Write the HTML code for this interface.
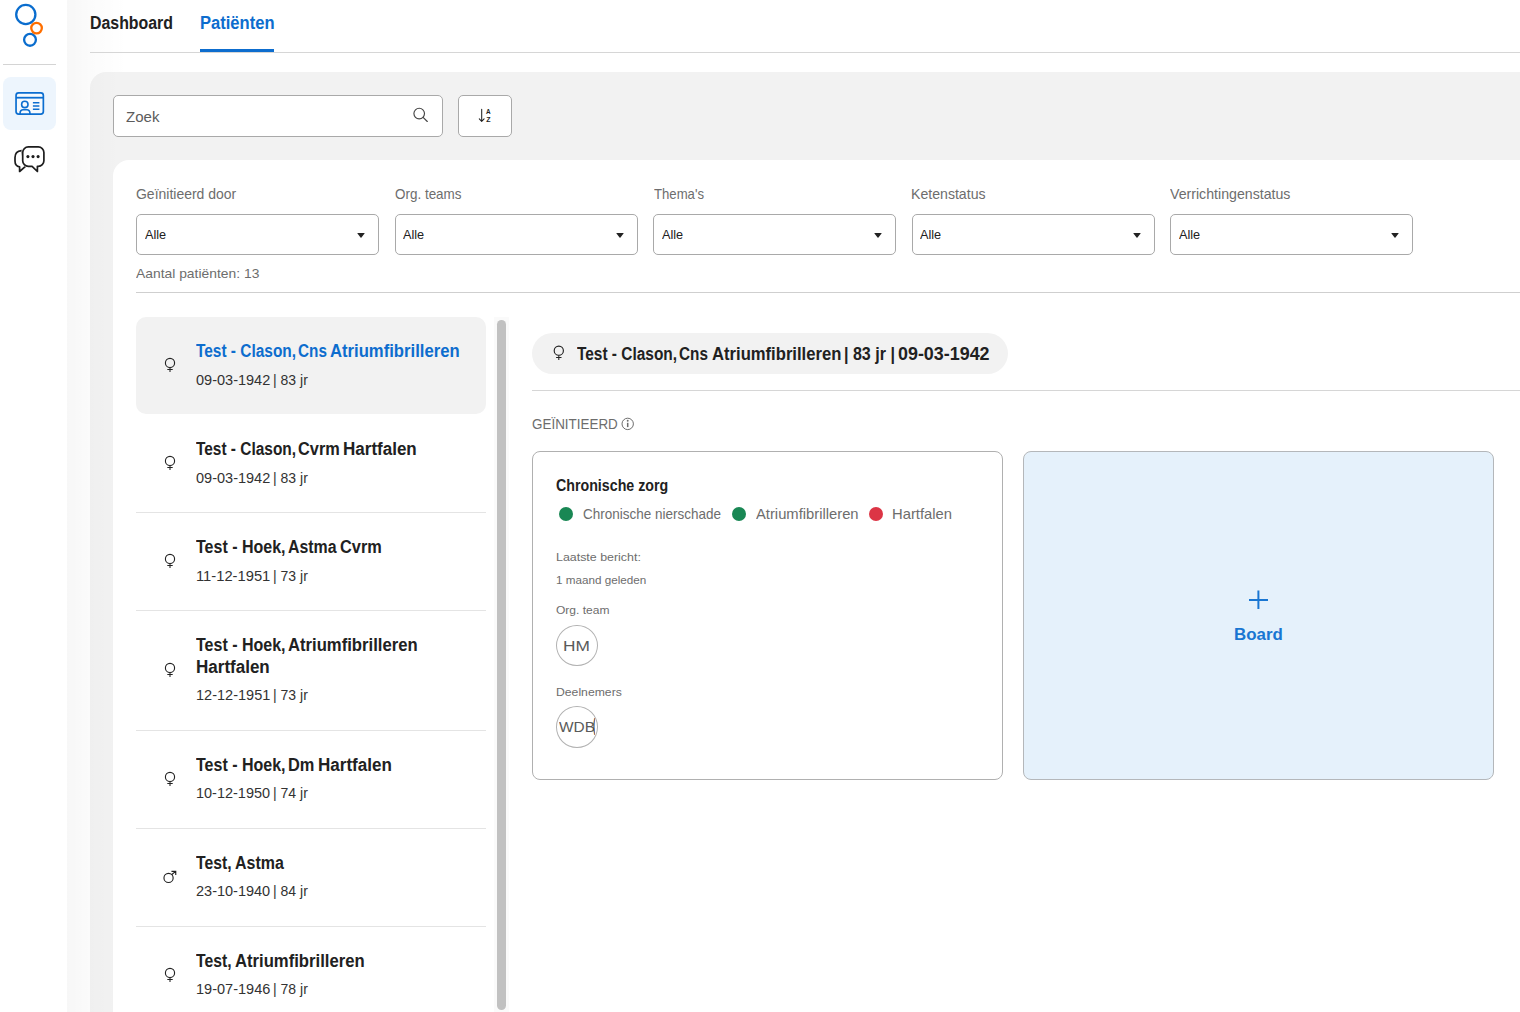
<!DOCTYPE html>
<html lang="nl"><head><meta charset="utf-8"><title>Patiënten</title>
<style>
html,body{margin:0;padding:0}
html{overflow:hidden}
body{width:1520px;height:1012px;overflow:hidden;background:#fff;position:relative;font-family:"Liberation Sans",sans-serif;color:#212121}
ul,li{margin:0;padding:0;list-style:none}
.a{position:absolute}
.t{position:absolute;white-space:nowrap;transform-origin:0 0;line-height:1.2}
.sel{position:absolute;top:214px;width:241px;height:39px;border:1px solid #a9a9a9;border-radius:5px;background:#fff}
.sel:after{content:"";position:absolute;right:13px;top:18px;border-left:4.5px solid transparent;border-right:4.5px solid transparent;border-top:5px solid #222;border-radius:1px}
.hr{position:absolute;height:1px;background:#e4e4e4;left:136px;width:350px}
.av{position:absolute;left:556px;width:40px;height:39.4px;border:1px solid #b2b2b2;border-radius:50%;background:#fff}
.dot{position:absolute;width:14px;height:14px;border-radius:50%;top:507px}
</style></head><body>
<div class="a" style="left:67px;top:0;width:60px;height:1012px;background:linear-gradient(to right,rgba(0,0,0,.032),rgba(0,0,0,.014) 40%,rgba(0,0,0,0))"></div>
<div class="a" style="left:90px;top:72px;width:1430px;height:940px;background:#f2f2f2;border-radius:16px 0 0 0"></div>
<div class="a" style="left:90px;top:72px;width:30px;height:940px;border-radius:16px 0 0 0;background:linear-gradient(to right,rgba(0,0,0,.012),rgba(0,0,0,0))"></div>
<div class="a" style="left:113px;top:160px;width:1407px;height:852px;background:#fff;border-radius:16px 0 0 0"></div>
<aside>
<div class="a" style="left:0;top:0;width:67px;height:1012px;background:#fff"></div>
<svg class="a" style="left:0;top:0" width="67" height="200" viewBox="0 0 67 200"><circle cx="30" cy="39.85" r="5.9" fill="none" stroke="#0a6dce" stroke-width="2.3"/><circle cx="36.55" cy="28.1" r="5.3" fill="none" stroke="#ff6f00" stroke-width="2.3"/><circle cx="25.8" cy="14.5" r="9.6" fill="none" stroke="#0a6dce" stroke-width="2.3"/><rect x="3" y="64" width="53" height="1" fill="#d4d4d4"/><rect x="3" y="77" width="53" height="53" rx="8" fill="#edf5fd"/><g fill="none" stroke="#0c6ed0" stroke-width="1.7"><rect x="16.05" y="92.95" width="27.3" height="21.1" rx="2.6" fill="#f6fafe"/><path d="M16 97.7H43.4" stroke-width="1.8"/><circle cx="24.8" cy="104.4" r="3.2" stroke-width="1.6"/><path d="M20.1 114.2v-1.5a2.9 2.9 0 0 1 2.9-2.9h4.0a2.9 2.9 0 0 1 2.9 2.9v1.5" stroke-width="1.6"/><path d="M32.9 102.8H39.4M32.9 106H39.4M32.9 109.15H39.4" stroke-width="1.5"/></g><g fill="#fff" stroke="#1d1d1d" stroke-width="1.7" stroke-linejoin="round"><path d="M21.5 150.6 C17.5 151 15 153.6 15 157.5 v3.5 c0 3.4 1.8 5.4 4.6 5.9 v4.6 l5.6-4.9 z"/><path d="M28.3 146.9 h10 a5.6 5.6 0 0 1 5.6 5.6 v8.2 a5.6 5.6 0 0 1-5.6 5.6 h-0.9 v5.0 l-5.3-5.0 h-3.8 a5.6 5.6 0 0 1-5.6-5.6 v-8.2 a5.6 5.6 0 0 1 5.6-5.6 z" stroke="#fff" stroke-width="2.7"/><path d="M28.3 146.9 h10 a5.6 5.6 0 0 1 5.6 5.6 v8.2 a5.6 5.6 0 0 1-5.6 5.6 h-0.9 v5.2 l-5.3-5.2 h-3.8 a5.6 5.6 0 0 1-5.6-5.6 v-8.2 a5.6 5.6 0 0 1 5.6-5.6 z"/></g><g fill="#1d1d1d"><circle cx="27.9" cy="156.6" r="1.55"/><circle cx="33" cy="156.6" r="1.55"/><circle cx="38.1" cy="156.6" r="1.55"/></g></svg>
</aside>
<nav>
<div class="a" style="left:90px;top:52px;width:1430px;height:1px;background:#d6d6d6"></div>
<div class="a" style="left:200px;top:49px;width:74px;height:3px;background:#0d6dce"></div>
<span class="t" id="t0" style="left:89.84px;top:13.01px;font-size:18px;font-weight:400;color:#212121;transform:scaleX(0.8826);font-weight:700;">Dashboard</span>
<span class="t" id="t1" style="left:200.09px;top:13.01px;font-size:18px;font-weight:400;color:#0d6dce;transform:scaleX(0.9196);font-weight:700;">Patiënten</span>
</nav>
<section>
<div class="a" style="left:113px;top:95px;width:328px;height:40px;border:1px solid #a9a9a9;border-radius:5px;background:#fff"></div>
<span class="t" id="t2" style="left:126.42px;top:107.91px;font-size:15.2px;font-weight:400;color:#5c5c5c;transform:scaleX(0.9897);">Zoek</span>
<svg class="a" style="left:410px;top:105px" width="22" height="22" viewBox="410 105 22 22"><g fill="none" stroke="#444" stroke-width="1.15" stroke-linecap="round"><circle cx="419.2" cy="113.55" r="5.3"/><path d="M423.1 117.4L427.3 121.5"/></g></svg>
<div class="a" style="left:458px;top:95px;width:52px;height:40px;border:1px solid #a9a9a9;border-radius:5px;background:#fff"></div>
<svg class="a" style="left:474px;top:105px" width="24" height="22" viewBox="474 105 24 22"><path d="M481.7 109.3V121.3M479.3 118.9L481.7 121.4L484.1 118.9" fill="none" stroke="#222" stroke-width="1.05" stroke-linecap="round" stroke-linejoin="round"/><text x="485.9" y="113.75" font-family="Liberation Sans,sans-serif" font-weight="700" font-size="6.4" fill="#222">A</text><text x="486.2" y="121.55" font-family="Liberation Sans,sans-serif" font-weight="700" font-size="7" fill="#222">Z</text></svg>
</section>
<section>
<div class="sel" style="left:136.0px"></div>
<div class="sel" style="left:394.5px"></div>
<div class="sel" style="left:653.0px"></div>
<div class="sel" style="left:911.5px"></div>
<div class="sel" style="left:1170.0px"></div>
<span class="t" id="t3" style="left:135.70px;top:185.82px;font-size:13.9px;font-weight:400;color:#6d6d6d;transform:scaleX(1.0060);">Geïnitieerd door</span>
<span class="t" id="t4" style="left:394.66px;top:185.82px;font-size:13.9px;font-weight:400;color:#6d6d6d;transform:scaleX(0.9682);">Org. teams</span>
<span class="t" id="t5" style="left:653.60px;top:185.82px;font-size:13.9px;font-weight:400;color:#6d6d6d;transform:scaleX(0.9459);">Thema's</span>
<span class="t" id="t6" style="left:911.04px;top:185.82px;font-size:13.9px;font-weight:400;color:#6d6d6d;transform:scaleX(1.0162);">Ketenstatus</span>
<span class="t" id="t7" style="left:1170.34px;top:185.82px;font-size:13.9px;font-weight:400;color:#6d6d6d;transform:scaleX(1.0193);">Verrichtingenstatus</span>
<span class="t" id="t8" style="left:144.78px;top:227.80px;font-size:12.5px;font-weight:400;color:#212121;transform:scaleX(1.0164);">Alle</span>
<span class="t" id="t9" style="left:403.28px;top:227.80px;font-size:12.5px;font-weight:400;color:#212121;transform:scaleX(1.0164);">Alle</span>
<span class="t" id="t10" style="left:661.78px;top:227.80px;font-size:12.5px;font-weight:400;color:#212121;transform:scaleX(1.0164);">Alle</span>
<span class="t" id="t11" style="left:920.28px;top:227.80px;font-size:12.5px;font-weight:400;color:#212121;transform:scaleX(1.0164);">Alle</span>
<span class="t" id="t12" style="left:1178.78px;top:227.80px;font-size:12.5px;font-weight:400;color:#212121;transform:scaleX(1.0164);">Alle</span>
<span class="t" id="t13" style="left:136.37px;top:265.81px;font-size:13.6px;font-weight:400;color:#6d6d6d;transform:scaleX(1.0199);">Aantal patiënten: 13</span>
<div class="a" style="left:136px;top:292px;width:1384px;height:1px;background:#cfcfcf"></div>
</section>
<ul>
<li>
<div class="a" style="left:136px;top:317px;width:350px;height:97px;border-radius:10px;background:#f2f2f2"></div>
<svg class="a" style="left:150px;top:317px" width="40" height="98" viewBox="150 317 40 98"><g fill="none" stroke="#222" stroke-width="1.15"><circle cx="170" cy="362.90" r="4.6"/><path d="M170 367.50V372.00M167.3 369.50H172.7" stroke-width="1.05"/></g></svg>
<span class="t" id="t14" style="left:196.28px;top:341.06px;font-size:18px;font-weight:400;color:#0d6dce;transform:scaleX(0.8573);font-weight:700;">Test - Clason,</span>
<span class="t" id="t15" style="left:298.42px;top:341.06px;font-size:18px;font-weight:400;color:#0d6dce;transform:scaleX(0.8498);font-weight:700;">Cns</span>
<span class="t" id="t16" style="left:330.49px;top:341.06px;font-size:18px;font-weight:400;color:#0d6dce;transform:scaleX(0.9257);font-weight:700;">Atriumfibrilleren</span>
<span class="t" id="t17" style="left:195.83px;top:372.00px;font-size:14px;font-weight:400;color:#333;transform:scaleX(1.0369);">09-03-1942</span>
<span class="t" id="t18" style="left:272.55px;top:372.00px;font-size:14px;font-weight:400;color:#333;transform:scaleX(1.0018);">| 83 jr</span>
</li>
<li>
<svg class="a" style="left:150px;top:415px" width="40" height="98" viewBox="150 415 40 98"><g fill="none" stroke="#222" stroke-width="1.15"><circle cx="170" cy="460.90" r="4.6"/><path d="M170 465.50V470.00M167.3 467.50H172.7" stroke-width="1.05"/></g></svg>
<span class="t" id="t19" style="left:196.28px;top:439.12px;font-size:18px;font-weight:400;color:#212121;transform:scaleX(0.8573);font-weight:700;">Test - Clason,</span>
<span class="t" id="t20" style="left:298.38px;top:439.12px;font-size:18px;font-weight:400;color:#212121;transform:scaleX(0.9076);font-weight:700;">Cvrm</span>
<span class="t" id="t21" style="left:343.26px;top:439.12px;font-size:18px;font-weight:400;color:#212121;transform:scaleX(0.9454);font-weight:700;">Hartfalen</span>
<span class="t" id="t22" style="left:195.83px;top:470.00px;font-size:14px;font-weight:400;color:#333;transform:scaleX(1.0369);">09-03-1942</span>
<span class="t" id="t23" style="left:272.55px;top:470.00px;font-size:14px;font-weight:400;color:#333;transform:scaleX(1.0018);">| 83 jr</span>
<div class="hr" style="top:512px"></div>
</li>
<li>
<svg class="a" style="left:150px;top:513px" width="40" height="98" viewBox="150 513 40 98"><g fill="none" stroke="#222" stroke-width="1.15"><circle cx="170" cy="558.90" r="4.6"/><path d="M170 563.50V568.00M167.3 565.50H172.7" stroke-width="1.05"/></g></svg>
<span class="t" id="t24" style="left:196.27px;top:537.06px;font-size:18px;font-weight:400;color:#212121;transform:scaleX(0.8896);font-weight:700;">Test - Hoek,</span>
<span class="t" id="t25" style="left:288.15px;top:537.06px;font-size:18px;font-weight:400;color:#212121;transform:scaleX(0.8832);font-weight:700;">Astma</span>
<span class="t" id="t26" style="left:340.38px;top:537.06px;font-size:18px;font-weight:400;color:#212121;transform:scaleX(0.9076);font-weight:700;">Cvrm</span>
<span class="t" id="t27" style="left:195.78px;top:568.00px;font-size:14px;font-weight:400;color:#333;transform:scaleX(1.0531);">11-12-1951</span>
<span class="t" id="t28" style="left:272.55px;top:568.00px;font-size:14px;font-weight:400;color:#333;transform:scaleX(1.0018);">| 73 jr</span>
<div class="hr" style="top:610px"></div>
</li>
<li>
<svg class="a" style="left:150px;top:611px" width="40" height="120" viewBox="150 611 40 120"><g fill="none" stroke="#222" stroke-width="1.15"><circle cx="170" cy="667.90" r="4.6"/><path d="M170 672.50V677.00M167.3 674.50H172.7" stroke-width="1.05"/></g></svg>
<span class="t" id="t29" style="left:196.27px;top:634.90px;font-size:18px;font-weight:400;color:#212121;transform:scaleX(0.8896);font-weight:700;">Test - Hoek,</span>
<span class="t" id="t30" style="left:288.14px;top:634.90px;font-size:18px;font-weight:400;color:#212121;transform:scaleX(0.9257);font-weight:700;">Atriumfibrilleren</span>
<span class="t" id="t31" style="left:195.56px;top:657.01px;font-size:18px;font-weight:400;color:#212121;transform:scaleX(0.9454);font-weight:700;">Hartfalen</span>
<span class="t" id="t32" style="left:195.79px;top:687.00px;font-size:14px;font-weight:400;color:#333;transform:scaleX(1.0374);">12-12-1951</span>
<span class="t" id="t33" style="left:272.55px;top:687.00px;font-size:14px;font-weight:400;color:#333;transform:scaleX(1.0018);">| 73 jr</span>
<div class="hr" style="top:730px"></div>
</li>
<li>
<svg class="a" style="left:150px;top:731px" width="40" height="98" viewBox="150 731 40 98"><g fill="none" stroke="#222" stroke-width="1.15"><circle cx="170" cy="776.90" r="4.6"/><path d="M170 781.50V786.00M167.3 783.50H172.7" stroke-width="1.05"/></g></svg>
<span class="t" id="t34" style="left:196.27px;top:755.12px;font-size:18px;font-weight:400;color:#212121;transform:scaleX(0.8896);font-weight:700;">Test - Hoek,</span>
<span class="t" id="t35" style="left:288.40px;top:755.12px;font-size:18px;font-weight:400;color:#212121;transform:scaleX(0.9101);font-weight:700;">Dm</span>
<span class="t" id="t36" style="left:317.81px;top:755.12px;font-size:18px;font-weight:400;color:#212121;transform:scaleX(0.9461);font-weight:700;">Hartfalen</span>
<span class="t" id="t37" style="left:195.80px;top:785.11px;font-size:14px;font-weight:400;color:#333;transform:scaleX(1.0342);">10-12-1950</span>
<span class="t" id="t38" style="left:272.55px;top:785.11px;font-size:14px;font-weight:400;color:#333;transform:scaleX(1.0018);">| 74 jr</span>
<div class="hr" style="top:828px"></div>
</li>
<li>
<svg class="a" style="left:150px;top:829px" width="40" height="98" viewBox="150 829 40 98"><g fill="none" stroke="#222" stroke-width="1.15"><circle cx="168.55" cy="877.9" r="4.6"/><path d="M171.85000000000002 874.5L175.65 871.4M171.45000000000002 871.4H175.75V874.9"/></g></svg>
<span class="t" id="t39" style="left:196.27px;top:853.12px;font-size:18px;font-weight:400;color:#212121;transform:scaleX(0.8741);font-weight:700;">Test,</span>
<span class="t" id="t40" style="left:234.70px;top:853.12px;font-size:18px;font-weight:400;color:#212121;transform:scaleX(0.8869);font-weight:700;">Astma</span>
<span class="t" id="t41" style="left:195.67px;top:883.05px;font-size:14px;font-weight:400;color:#333;transform:scaleX(1.0360);">23-10-1940</span>
<span class="t" id="t42" style="left:272.55px;top:883.05px;font-size:14px;font-weight:400;color:#333;transform:scaleX(1.0018);">| 84 jr</span>
<div class="hr" style="top:926px"></div>
</li>
<li>
<svg class="a" style="left:150px;top:927px" width="40" height="98" viewBox="150 927 40 98"><g fill="none" stroke="#222" stroke-width="1.15"><circle cx="170" cy="972.90" r="4.6"/><path d="M170 977.50V982.00M167.3 979.50H172.7" stroke-width="1.05"/></g></svg>
<span class="t" id="t43" style="left:196.27px;top:951.01px;font-size:18px;font-weight:400;color:#212121;transform:scaleX(0.8741);font-weight:700;">Test,</span>
<span class="t" id="t44" style="left:234.69px;top:951.01px;font-size:18px;font-weight:400;color:#212121;transform:scaleX(0.9257);font-weight:700;">Atriumfibrilleren</span>
<span class="t" id="t45" style="left:195.79px;top:981.00px;font-size:14px;font-weight:400;color:#333;transform:scaleX(1.0374);">19-07-1946</span>
<span class="t" id="t46" style="left:272.55px;top:981.00px;font-size:14px;font-weight:400;color:#333;transform:scaleX(1.0018);">| 78 jr</span>
</li>
</ul>
<div class="a" style="left:494px;top:317px;width:15px;height:695px;background:#fafafa"></div>
<div class="a" style="left:497px;top:320px;width:9px;height:690px;border-radius:4.5px;background:#c1c1c1"></div>
<main>
<div class="a" style="left:532px;top:333px;width:476px;height:41px;border-radius:21px;background:#f2f2f2"></div>
<svg class="a" style="left:548px;top:342px" width="22" height="24" viewBox="548 342 22 24"><g fill="none" stroke="#222" stroke-width="1.15"><circle cx="558.8" cy="350.65" r="4.6"/><path d="M558.8 355.25V360.00M556.0999999999999 357.50H561.5" stroke-width="1.05"/></g></svg>
<div class="a" style="left:532px;top:390px;width:988px;height:1px;background:#d6d6d6"></div>
<svg class="a" style="left:620px;top:416px" width="16" height="16" viewBox="620 416 16 16"><circle cx="627.7" cy="423.9" r="5.7" fill="none" stroke="#6d6d6d" stroke-width="1"/><rect x="626.95" y="422.8" width="1.5" height="4.3" fill="#6d6d6d"/><circle cx="627.7" cy="420.8" r=".95" fill="#6d6d6d"/></svg>
<div class="a" style="left:532px;top:451px;width:469px;height:327px;border:1px solid #b0b0b0;border-radius:8px;background:#fff"></div>
<div class="a" style="left:1023px;top:451px;width:469px;height:327px;border:1px solid #b4b7ba;border-radius:8px;background:#e5f1fb"></div>
<div class="dot" style="left:559px;background:#198754"></div><div class="dot" style="left:731.7px;background:#198754"></div><div class="dot" style="left:869px;background:#dc3545"></div>
<div class="av" style="top:624.8px"></div><div class="av" style="top:706.2px"></div>
<svg class="a" style="left:1246px;top:588px" width="24" height="24" viewBox="1246 588 24 24"><path d="M1258.4 590.5V609.1M1249 599.9H1268" fill="none" stroke="#1976d2" stroke-width="2"/></svg>
<span class="t" id="t47" style="left:577.33px;top:344.01px;font-size:18px;font-weight:400;color:#212121;transform:scaleX(0.8573);font-weight:700;">Test - Clason,</span>
<span class="t" id="t48" style="left:679.47px;top:344.01px;font-size:18px;font-weight:400;color:#212121;transform:scaleX(0.8498);font-weight:700;">Cns</span>
<span class="t" id="t49" style="left:711.54px;top:344.01px;font-size:18px;font-weight:400;color:#212121;transform:scaleX(0.9236);font-weight:700;">Atriumfibrilleren</span>
<span class="t" id="t50" style="left:843.68px;top:344.01px;font-size:18px;font-weight:400;color:#212121;transform:scaleX(0.8914);font-weight:700;">| 83 jr |</span>
<span class="t" id="t51" style="left:897.69px;top:344.01px;font-size:18px;font-weight:400;color:#212121;transform:scaleX(0.9943);font-weight:700;">09-03-1942</span>
<span class="t" id="t52" style="left:531.72px;top:416.80px;font-size:13.8px;font-weight:400;color:#6d6d6d;transform:scaleX(0.9735);">GEÏNITIEERD</span>
<span class="t" id="t53" style="left:556.02px;top:477.01px;font-size:15.7px;font-weight:400;color:#212121;transform:scaleX(0.9066);font-weight:700;">Chronische zorg</span>
<span class="t" id="t54" style="left:583.21px;top:506.02px;font-size:13.9px;font-weight:400;color:#6d6d6d;transform:scaleX(0.9709);">Chronische nierschade</span>
<span class="t" id="t55" style="left:756.37px;top:506.02px;font-size:13.9px;font-weight:400;color:#6d6d6d;transform:scaleX(1.0632);">Atriumfibrilleren</span>
<span class="t" id="t56" style="left:892.39px;top:506.02px;font-size:13.9px;font-weight:400;color:#6d6d6d;transform:scaleX(1.0646);">Hartfalen</span>
<span class="t" id="t57" style="left:555.98px;top:549.81px;font-size:11.8px;font-weight:400;color:#6d6d6d;transform:scaleX(1.0523);">Laatste bericht:</span>
<span class="t" id="t58" style="left:556.41px;top:572.72px;font-size:11.8px;font-weight:400;color:#6d6d6d;transform:scaleX(0.9907);">1 maand geleden</span>
<span class="t" id="t59" style="left:556.13px;top:602.81px;font-size:11.8px;font-weight:400;color:#6d6d6d;transform:scaleX(1.0201);">Org. team</span>
<span class="t" id="t60" style="left:555.90px;top:685.00px;font-size:11.8px;font-weight:400;color:#6d6d6d;transform:scaleX(1.0346);">Deelnemers</span>
<span class="t" id="t61" style="left:563.48px;top:636.91px;font-size:15.3px;font-weight:400;color:#5a5a5a;transform:scaleX(1.1298);">HM</span>
<span class="t" id="t62" style="left:558.53px;top:717.75px;font-size:15.3px;font-weight:400;color:#5a5a5a;transform:scaleX(1.0090);">WDB</span>
<div class="a" style="left:590px;top:706px;width:5.3px;height:42px;overflow:hidden"><span class="t" style="left:3.2px;top:8.4px;font-size:15.3px;font-weight:700;color:#444;transform:scale(.5,1.2)">(</span></div>
<span class="t" id="t63" style="left:1234.27px;top:623.80px;font-size:17.3px;font-weight:400;color:#1976d2;transform:scaleX(0.9766);font-weight:700;">Board</span>
</main>
</body></html>
